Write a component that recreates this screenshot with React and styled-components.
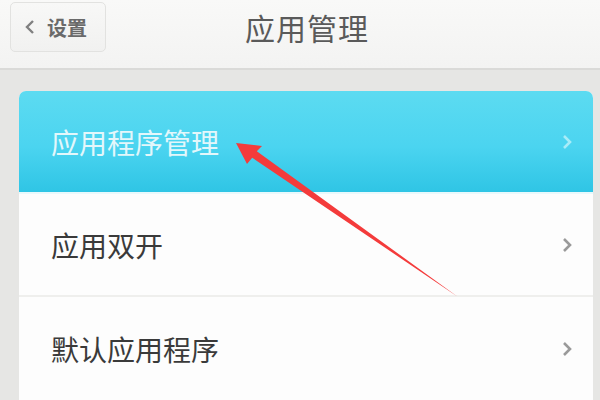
import React from "react"
import styled, { createGlobalStyle } from "styled-components"

const Global = createGlobalStyle`
  html, body {
    margin: 0;
    padding: 0;
  }
  body {
    width: 600px;
    height: 400px;
    overflow: hidden;
    font-family: "Noto Sans CJK SC", "Noto Sans", sans-serif;
  }
`

const Page = styled.div`
  position: relative;
  width: 600px;
  height: 400px;
  display: flex;
  flex-direction: column;
  background: #e6e6e4;
  overflow: hidden;
`

const Header = styled.div`
  height: 68px;
  flex-shrink: 0;
  display: grid;
  grid-template-columns: 1fr auto 1fr;
  align-items: start;
  padding: 2px 10px 0;
  box-sizing: content-box;
  height: 66px;
  background: linear-gradient(#f9f9f8, #f3f3f2);
  border-bottom: 2px solid #dadad8;
`

const BackButton = styled.div`
  justify-self: start;
  width: 96px;
  height: 50px;
  box-sizing: border-box;
  display: flex;
  align-items: center;
  gap: 12px;
  padding-left: 14px;
  border: 1px solid #e2e2e0;
  border-radius: 5px;
  background: linear-gradient(#f8f8f7, #f1f1f0);
  color: #6a6a6a;
  font-size: 20px;
  font-weight: 700;
`

const Title = styled.div`
  padding-left: 14px;
  line-height: 50px;
  font-size: 30px;
  color: #5a5a5a;
  letter-spacing: 1px;
`

const Content = styled.div`
  flex: 1;
  padding: 21px 7px 0 19px;
`

const Card = styled.div`
  border-radius: 7px 7px 0 0;
  overflow: hidden;
  background: #fdfdfd;
`

const Row = styled.div`
  height: 103px;
  box-sizing: border-box;
  display: flex;
  align-items: center;
  justify-content: space-between;
  padding: 0 20px 0 32px;
  font-size: 28px;
  color: ${p => (p.$active ? "#e3f7fb" : "#3a3a3a")};
  background: ${p =>
    p.$active ? "linear-gradient(#5cdbf1, #4bd4f0 55%, #2fc5e5)" : "#fdfdfd"};
  border-bottom: 2px solid ${p => (p.$active ? "#e9f9fc" : "#efefed")};
  &:last-child {
    border-bottom: none;
  }
`

const Chevron = ({ color }) => (
  <svg width="12" height="16" viewBox="0 0 12 16">
    <path d="M3 2 L9 8 L3 14" fill="none" stroke={color} strokeWidth="2.6" />
  </svg>
)

const Overlay = styled.svg`
  position: absolute;
  left: 0;
  top: 0;
  pointer-events: none;
`

const items = [
  { label: "应用程序管理", active: true },
  { label: "应用双开" },
  { label: "默认应用程序" },
]

const App = () => (
  <Page>
    <Global />
    <Header>
      <BackButton>
        <svg width="10" height="16" viewBox="0 0 10 16">
          <path d="M8 2 L2 8 L8 14" fill="none" stroke="#808080" strokeWidth="2.4" />
        </svg>
        设置
      </BackButton>
      <Title>应用管理</Title>
      <div />
    </Header>
    <Content>
      <Card>
        {items.map(it => (
          <Row key={it.label} $active={it.active}>
            {it.label}
            <Chevron color={it.active ? "#a8ecf8" : "#9a9a9a"} />
          </Row>
        ))}
      </Card>
    </Content>
    <Overlay width="600" height="400" viewBox="0 0 600 400">
      <polygon
        points="236,143 262,146 256.8,151.2 458,297 252.2,157.8 247,164"
        fill="#f43b3b"
      />
    </Overlay>
  </Page>
)

export default App
